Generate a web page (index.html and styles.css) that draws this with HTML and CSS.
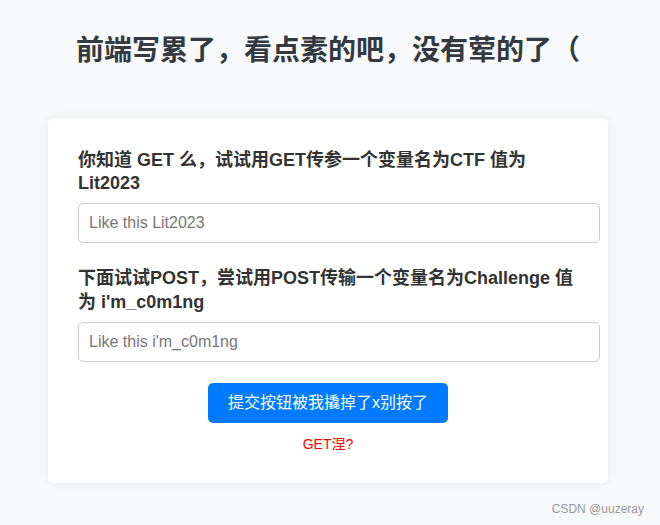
FILE: index.html
```html
<!DOCTYPE html>
<html lang="zh-CN">
<head>
<meta charset="utf-8">
<title>Lit2023</title>
<link rel="stylesheet" href="styles.css">
</head>
<body>
<div class="page">
  <h1 class="title">前端写累了，看点素的吧，没有荤的了（</h1>
  <form class="card">
    <div class="group">
      <label class="label" for="ctf">你知道 GET 么，试试用GET传参一个变量名为CTF 值为 Lit2023</label>
      <input class="field" id="ctf" type="text" placeholder="Like this Lit2023">
    </div>
    <div class="group">
      <label class="label" for="ch">下面试试POST，尝试用POST传输一个变量名为Challenge 值为 i'm_c0m1ng</label>
      <input class="field" id="ch" type="text" placeholder="Like this i'm_c0m1ng">
    </div>
    <button class="submit" type="button">提交按钮被我撬掉了x别按了</button>
    <p class="msg">GET涅?</p>
  </form>
</div>
<div class="watermark">CSDN @uuzeray</div>
</body>
</html>
```
FILE: styles.css
```css
html, body {
  margin: 0;
  padding: 0;
}
body {
  background: #f8f9fa;
  font-family: "Liberation Sans", Arial, "Noto Sans CJK SC", sans-serif;
  color: #333;
  height: 525px;
  position: relative;
  overflow: hidden;
}
.page {
  width: 656px;
  padding-top: 34px;
}
.title {
  margin: 0 0 50px;
  font-size: 28px;
  line-height: 1.2;
  font-weight: bold;
  text-align: center;
  color: #343a40;
}
.card {
  display: block;
  width: 500px;
  margin: 0 auto;
  padding: 31px 30px 29px;
  background: #fff;
  border-radius: 6px;
  box-shadow: 0 0 10px rgba(0, 0, 0, 0.08);
}
.group {
  margin-bottom: 21px;
}
.group + .group {
  padding-top: 3px;
}
.label {
  display: block;
  font-size: 18px;
  line-height: 23.4px;
  font-weight: bold;
  margin-bottom: 8px;
  color: #333;
}
.field {
  display: block;
  width: 100%;
  box-sizing: content-box;
  height: 18px;
  padding: 10px;
  border: 1px solid #ccc;
  border-radius: 5px;
  font-family: "Liberation Sans", Arial, "Noto Sans CJK SC", sans-serif;
  font-size: 16px;
  line-height: 18px;
  color: #333;
  background: #fff;
  margin: 0;
}
.field::placeholder {
  color: #777;
}
.submit {
  display: block;
  width: 240px;
  height: 40px;
  margin: 0 auto;
  border: none;
  border-radius: 5px;
  background: #007bff;
  color: #fff;
  font-family: "Liberation Sans", Arial, "Noto Sans CJK SC", sans-serif;
  font-size: 16px;
  line-height: 20px;
  padding: 0;
}
.msg {
  margin: 11px 0 0;
  text-align: center;
  color: #ff0000;
  font-size: 14px;
  line-height: 20px;
}
.watermark {
  position: absolute;
  right: 16px;
  bottom: 8px;
  font-size: 12px;
  line-height: 16px;
  color: #999;
}
```
